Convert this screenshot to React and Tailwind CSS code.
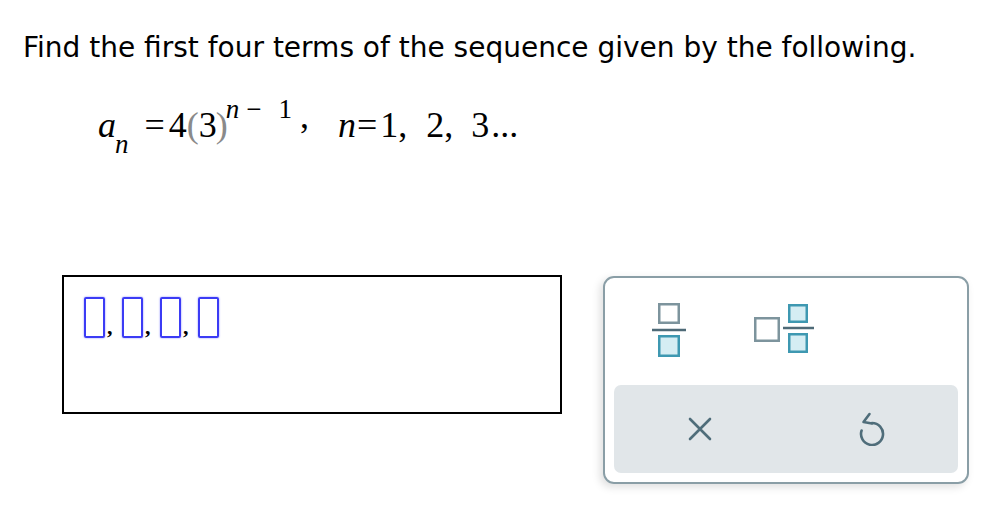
import React from "react";

function FractionIcon() {
  return (
    <svg width="34" height="54" viewBox="0 0 34 54">
      <rect x="7.25" y="1.25" width="19.5" height="18.5" fill="#ffffff" stroke="#7d949d" strokeWidth="2.5" />
      <line x1="0" y1="27" x2="34" y2="27" stroke="#4e6a77" strokeWidth="2.5" />
      <rect x="7.25" y="33.25" width="19.5" height="19.5" fill="#d5edf3" stroke="#3e98b1" strokeWidth="2.5" />
    </svg>
  );
}

function MixedIcon() {
  return (
    <svg width="60" height="51" viewBox="0 0 60 51">
      <rect x="1.25" y="15.25" width="23.5" height="22.5" fill="#ffffff" stroke="#7d949d" strokeWidth="2.5" />
      <line x1="29" y1="25" x2="60" y2="25" stroke="#4e6a77" strokeWidth="2.5" />
      <rect x="35.25" y="2.25" width="17.5" height="16.5" fill="#d5edf3" stroke="#3e98b1" strokeWidth="2.5" />
      <rect x="35.25" y="31.25" width="17.5" height="17.5" fill="#d5edf3" stroke="#3e98b1" strokeWidth="2.5" />
    </svg>
  );
}

function XIcon() {
  return (
    <svg width="24" height="24" viewBox="0 0 24 24">
      <path d="M2 2 L22 22 M22 2 L2 22" stroke="#4f6d7a" strokeWidth="2.6" strokeLinecap="round" fill="none" />
    </svg>
  );
}

function UndoIcon() {
  return (
    <svg width="28" height="34" viewBox="0 0 28 34">
      <path d="M14 11 A 11 11 0 1 1 3.6 18.5" stroke="#4f6d7a" strokeWidth="2.6" strokeLinecap="round" fill="none" />
      <path d="M11.5 2 L5.5 10 L14 11.5" stroke="#4f6d7a" strokeWidth="2.6" strokeLinecap="round" strokeLinejoin="round" fill="none" />
    </svg>
  );
}

function BlueBox() {
  return (
    <span className="inline-block w-[21px] h-[41px] border-2 border-[#3b3bf5] rounded-[2px] shadow-[0_0_2px_rgba(80,80,255,0.7)]" />
  );
}

function Comma() {
  return (
    <span className="w-[17px] h-[41px] flex items-end pl-[2px] text-[22px] leading-[22px] font-bold text-black font-['Liberation_Serif',serif]">,</span>
  );
}

export default function App() {
  return (
    <div className="w-[986px] h-[523px] bg-white overflow-hidden text-black font-['DejaVu_Sans',sans-serif]">
      <p className="pl-[23px] pt-[31px] text-[28px] leading-[34px] whitespace-nowrap">
        Find the first four terms of the sequence given by the following.
      </p>

      <div className="mt-[42px] pl-[98px] h-[36px] flex items-baseline text-[36px] leading-[36px] whitespace-pre font-['Liberation_Serif',serif]">
        <span className="italic">a</span>
        <span className="italic text-[27px] relative top-[16px] ml-[-1px]">n</span>
        <span className="ml-[16px]">=</span>
        <span className="ml-[4px]">4</span>
        <span className="text-[#8a8a8a]">(</span>
        <span>3</span>
        <span className="text-[#8a8a8a] ml-[-1px]">)</span>
        <span className="relative -top-[19px] text-[27px] ml-[-2px] flex items-baseline">
          <span className="italic">n</span>
          <span className="ml-[7px]">−</span>
          <span className="ml-[17px]">1</span>
        </span>
        <span className="ml-[8px] relative -top-[9px]">,</span>
        <span className="italic ml-[29px]">n</span>
        <span className="ml-[1px]">=</span>
        <span className="ml-[3px]">1</span>
        <span>,</span>
        <span className="ml-[19px]">2</span>
        <span>,</span>
        <span className="ml-[18px]">3</span>
        <span className="ml-[2px]">...</span>
      </div>

      <div className="mt-[132px] flex items-start">
        <div className="ml-[62px] w-[500px] h-[139px] border-2 border-black pl-[20px] pt-[20px]">
          <div className="flex items-start">
            <BlueBox />
            <Comma />
            <BlueBox />
            <Comma />
            <BlueBox />
            <Comma />
            <BlueBox />
          </div>
        </div>

        <div className="ml-[41px] mt-[1px] w-[366px] h-[208px] border-2 border-[#8a9ea6] rounded-[11px] shadow-[-3px_3px_8px_rgba(0,0,0,0.13)] flex flex-col">
          <div className="h-[107px] flex items-start pt-[25px] pl-[47px]">
            <button className="w-[34px] h-[54px]">
              <FractionIcon />
            </button>
            <button className="ml-[68px] w-[60px] h-[51px]">
              <MixedIcon />
            </button>
          </div>
          <div className="ml-[9px] w-[344px] h-[88px] bg-[#e1e6e9] rounded-[7px] grid grid-cols-2 items-center">
            <button className="flex justify-center items-center">
              <XIcon />
            </button>
            <button className="flex justify-center items-center">
              <UndoIcon />
            </button>
          </div>
        </div>
      </div>
    </div>
  );
}
